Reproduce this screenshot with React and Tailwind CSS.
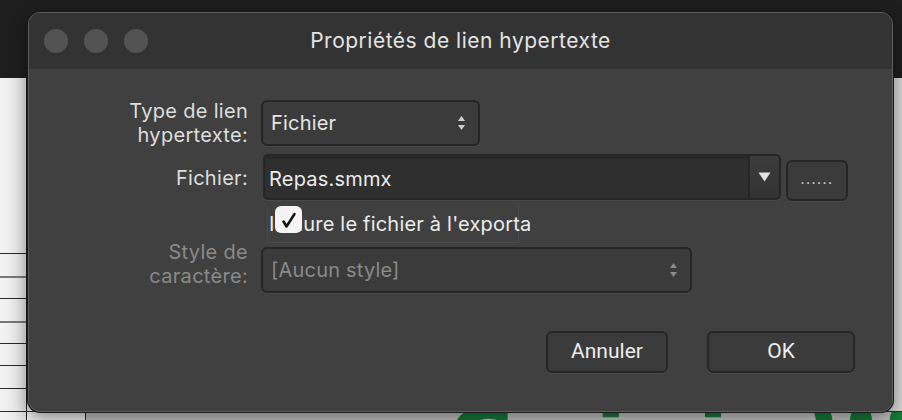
import React from 'react';

const ui = { fontFamily: 'Inter, "Noto Sans", sans-serif' };

function Stepper({ dim }) {
  const c = dim ? '#8a8a8a' : '#d0d0d0';
  return (
    <svg width="9" height="18" viewBox="0 0 9 18">
      <path d="M4.5 2 L8 7 L1 7 Z" fill={c} />
      <path d="M4.5 16 L8 11 L1 11 Z" fill={c} />
    </svg>
  );
}

function PopUp({ value, width, dim }) {
  return (
    <div
      className={`flex h-[46px] items-center justify-between rounded-[6px] border-2 border-[#262626] bg-[#3b3b3b] pl-[8px] pr-[12px] shadow-[0_1px_0_#4a4a4a] ${width}`}
    >
      <span className={`text-[20px] tracking-[0.2px] ${dim ? 'text-[#8a8a8a]' : 'text-[#e6e6e6]'}`}>{value}</span>
      <Stepper dim={dim} />
    </div>
  );
}

function Label({ children, dim }) {
  return (
    <div
      className={`w-[219px] shrink-0 text-right text-[20px] leading-[24px] tracking-[0.3px] ${dim ? 'text-[#8a8a8a]' : 'text-[#dedede]'}`}
    >
      {children}
    </div>
  );
}

function PushButton({ children, width }) {
  return (
    <button
      className={`flex h-[42px] items-center justify-center rounded-[6px] border-2 border-[#262626] bg-[#3b3b3b] text-[21px] text-[#ececec] shadow-[0_1px_0_#4c4c4c] ${width}`}
      style={{ fontFamily: 'Roboto, sans-serif' }}
    >
      {children}
    </button>
  );
}

function Dialog() {
  return (
    <div
      className="absolute left-[28px] top-[12px] flex h-[400px] w-[865px] flex-col overflow-hidden rounded-[12px] border border-[#5c5c5c] bg-[#404040] shadow-[0_0_0_1px_#1a1a1a,0_6px_18px_rgba(0,0,0,0.45)]"
      style={ui}
    >
      {/* title bar */}
      <div className="grid h-[56px] shrink-0 grid-cols-[1fr_auto_1fr] items-center bg-[#333333]">
        <div className="flex gap-[16px] pl-[15px]">
          <span className="h-[24px] w-[24px] rounded-full bg-[#535353]" />
          <span className="h-[24px] w-[24px] rounded-full bg-[#535353]" />
          <span className="h-[24px] w-[24px] rounded-full bg-[#535353]" />
        </div>
        <div className="text-[21px] tracking-[0.5px] text-[#e4e4e4]">Propriétés de lien hypertexte</div>
        <div />
      </div>

      {/* form */}
      <div className="flex flex-col pt-[30px]">
        <div className="flex items-center gap-[13px]">
          <Label>
            Type de lien
            <br />
            hypertexte:
          </Label>
          <PopUp value="Fichier" width="w-[219px]" />
        </div>

        <div className="mt-[7px] flex items-center gap-[13px]">
          <Label>Fichier:</Label>
          <div className="ml-[2px] flex items-start gap-[5px]">
            <div className="flex h-[46px] w-[518px] overflow-hidden rounded-[5px] border-2 border-[#262626] bg-[#2f2f2f] shadow-[0_1px_0_#4a4a4a]">
              <div className="flex flex-1 items-center border-t-[3px] border-[#292929] pl-[4px] text-[20px] tracking-[0.2px] text-[#ececec]">
                Repas.smmx
              </div>
              <div className="flex w-[31px] items-center justify-center border-l-2 border-[#262626] bg-gradient-to-b from-[#3c3c3c] to-[#333333]">
                <svg width="13" height="10" viewBox="0 0 13 10">
                  <path d="M0.5 0.5 L12.5 0.5 L6.5 9.5 Z" fill="#e0e0e0" />
                </svg>
              </div>
            </div>
            <div className="mt-[6px] flex h-[41px] w-[62px] items-center justify-center rounded-[6px] border-2 border-[#262626] bg-[#3b3b3b] pb-[4px] text-[14px] tracking-[1.5px] text-[#e0e0e0] shadow-[0_1px_0_#4a4a4a]">
              ......
            </div>
          </div>
        </div>

        <div className="mt-[4px] flex gap-[13px]">
          <div className="w-[219px] shrink-0" />
          <div className="relative ml-[6px] flex h-[38px] w-[252px] items-center border-x border-b border-[#4a4a4a] pl-[1px]">
            <span className="whitespace-nowrap text-[20px] tracking-[0.2px] text-[#ececec]">Inclure le fichier à l'exporta</span>
            <span className="absolute left-[7px] top-[1px] flex h-[27px] w-[27px] items-center justify-center rounded-[6px] bg-[#f4f4f4]">
              <svg width="20" height="20" viewBox="0 0 20 20">
                <path d="M4.5 11.5 L7.5 16.5 L15.5 4" fill="none" stroke="#151515" strokeWidth="2.6" strokeLinecap="round" strokeLinejoin="round" />
              </svg>
            </span>
          </div>
        </div>

        <div className="mt-[4px] flex items-start gap-[13px]">
          <div className="-mt-[7px]">
            <Label dim>
              Style de
              <br />
              caractère:
            </Label>
          </div>
          <PopUp value="[Aucun style]" width="w-[431px]" dim />
        </div>

        <div className="mt-[38px] flex justify-end gap-[39px] pr-[37px]">
          <PushButton width="w-[122px]">Annuler</PushButton>
          <PushButton width="w-[148px]">OK</PushButton>
        </div>
      </div>
    </div>
  );
}

export default function App() {
  return (
    <div className="relative h-[420px] w-[902px] overflow-hidden bg-[#dcdcdc]" style={ui}>
      {/* app window behind the sheet */}
      <div className="flex h-full flex-col">
        <div className="h-[78px] shrink-0 bg-[#1e1e1e]" />
        <div className="flex flex-1">
          {/* row header column */}
          <div className="flex w-[27px] shrink-0 flex-col border-r border-[#1f1f1f] bg-gradient-to-r from-[#f4f4f4] to-[#e2e2e2]">
            <div className="h-[175px] shrink-0" />
            <div className="h-[23px] border-t border-[#2a2a2a]" />
            <div className="h-[22px] border-t-2 border-[#777]" />
            <div className="h-[23px] border-t border-[#2a2a2a]" />
            <div className="h-[22px] border-t-2 border-[#777]" />
            <div className="h-[22px] border-t border-[#2a2a2a]" />
            <div className="h-[23px] border-t border-[#2a2a2a]" />
            <div className="h-[23px] border-t border-[#2a2a2a]" />
            <div className="flex-1 border-t border-[#2a2a2a]" />
          </div>
          <div className="flex flex-1 flex-col">
            <div className="flex flex-1">
              <div className="flex-1 bg-gradient-to-r from-[#eeeeee] to-[#d6d6d6]" />
              <div className="flex w-[9px] flex-col">
                <div className="flex-1 bg-[#d8d8d8]" />
                <div className="h-[55px] bg-[#177a3a]" />
              </div>
            </div>
            <div className="flex h-[9px] border-t border-[#2a2a2a]">
              <div className="w-[59px] border-r border-[#2a2a2a] bg-[#f0f0f0]" />
              <div className="flex-1 overflow-hidden bg-[#c4c4c4] pl-[360px]">
                <div
                  className="-mt-[14px] whitespace-nowrap text-[92px] font-bold leading-none tracking-[8px] text-[#177a3a]"
                  style={{ fontFamily: '"DejaVu Sans", sans-serif' }}
                >
                  CuisinW
                </div>
              </div>
            </div>
          </div>
        </div>
      </div>

      <Dialog />
    </div>
  );
}
